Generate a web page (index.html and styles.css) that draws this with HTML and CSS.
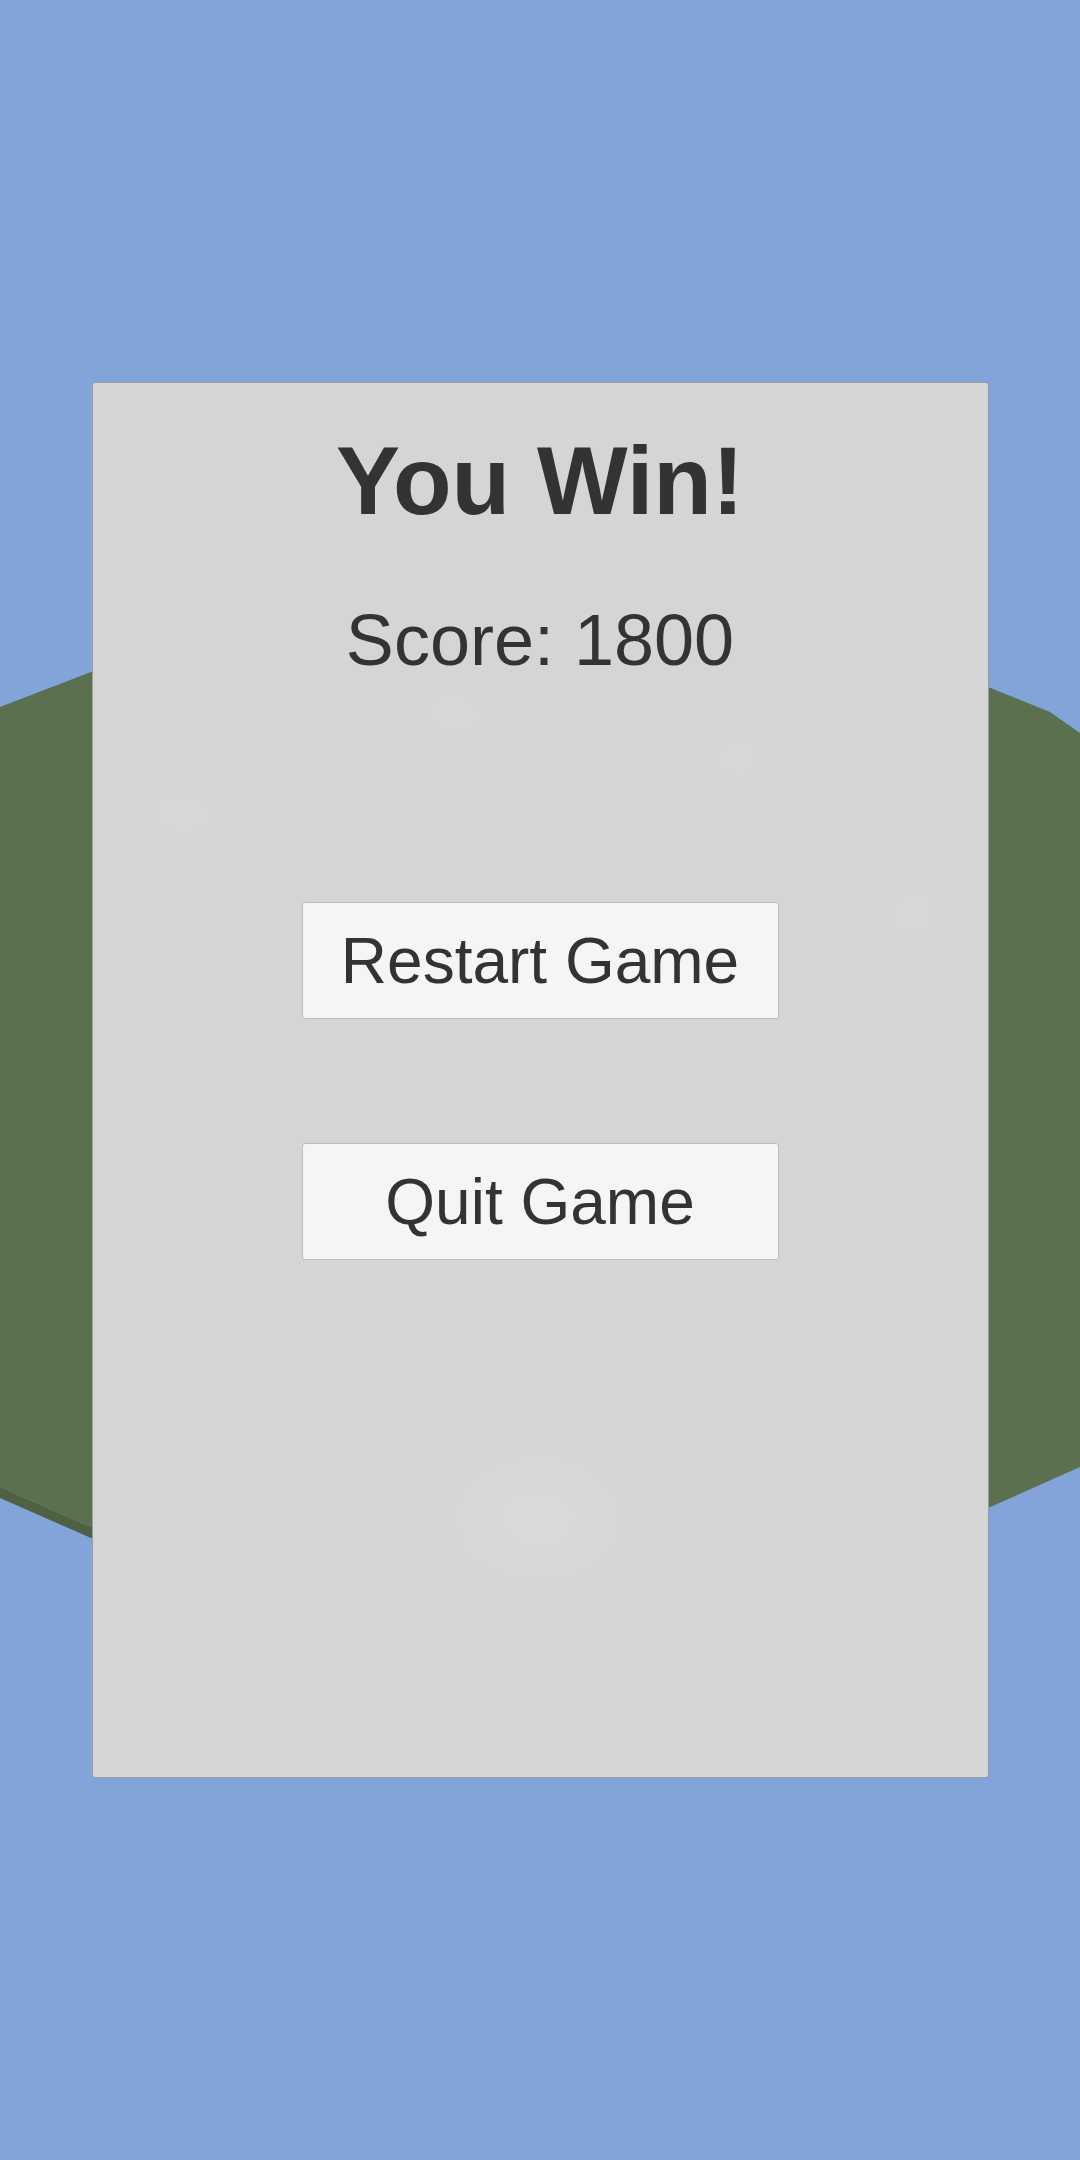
FILE: index.html
```html
<!DOCTYPE html>
<html lang="en">
    <head>
        <meta charset="UTF-8">
        <title>You Win!</title>
        <link rel="stylesheet" href="styles.css">
    </head>
    <body>

        <!-- ground plate seen behind the menu -->
        <svg class="ground" width="1080" height="2160" viewBox="0 0 1080 2160">
            <polygon points="0,1487 91,1527 988,1508 91,1538 0,1498" fill="#4e6142"/>
            <polygon points="0,707 91,672 988,687 1050,712 1080,733 1080,1467 988,1508 91,1527 0,1487" fill="#5a704f"/>
        </svg>

        <div class="panel">
            <span class="ghost" style="left:310px;top:300px;width:100px;height:60px"></span>
            <span class="ghost" style="left:610px;top:345px;width:70px;height:60px"></span>
            <span class="ghost" style="left:40px;top:395px;width:100px;height:70px"></span>
            <span class="ghost" style="left:780px;top:495px;width:80px;height:70px"></span>
            <span class="ghost big" style="left:320px;top:1040px;width:250px;height:190px"></span>

            <h1 class="title">You Win!</h1>
            <p class="score">Score: <span id="score">1800</span></p>

            <div class="menu">
                <button class="btn" id="restartBtn">Restart Game</button>
                <button class="btn" id="quitBtn">Quit Game</button>
            </div>
        </div>

    </body>
</html>
```

FILE: styles.css
```css
body {
    margin: 0;
    background-color: #82a4d8;
    font-family: 'Liberation Sans', Arial, sans-serif;
    color: #333333;
    height: 2160px;
    position: relative;
    overflow: hidden;
}
.ground {
    position: absolute;
    left: 0;
    top: 0;
}
.panel {
    position: relative;
    width: 897px;
    height: 1396px;
    margin: 382px auto 0;
    box-sizing: border-box;
    padding-top: 49px;
    background-color: #d5d5d5;
    border: 1px solid #9c9c9c;
    border-radius: 3px;
    display: flex;
    flex-direction: column;
    align-items: center;
}
.ghost {
    position: absolute;
    border-radius: 50%;
    background: radial-gradient(closest-side, rgba(224,224,226,0.35), rgba(213,213,213,0));
}
.ghost.big {
    background: radial-gradient(closest-side, rgba(222,224,226,0.5), rgba(213,213,213,0));
}
.title {
    position: relative;
    margin: 0;
    font-size: 96px;
    line-height: 98px;
    font-weight: bold;
}
.score {
    position: relative;
    margin: 73px 0 0;
    font-size: 72px;
    line-height: 74px;
}
.menu {
    position: relative;
    margin-top: 225px;
    display: flex;
    flex-direction: column;
    gap: 124px;
}
.btn {
    width: 477px;
    height: 117px;
    padding: 0;
    background-color: #f5f5f5;
    border: 1px solid #bcbcbc;
    border-radius: 3px;
    font-family: 'Liberation Sans', Arial, sans-serif;
    font-size: 64px;
    line-height: 1;
    color: #333333;
    cursor: pointer;
}
.btn:hover {
    background-color: #ffffff;
}
```
